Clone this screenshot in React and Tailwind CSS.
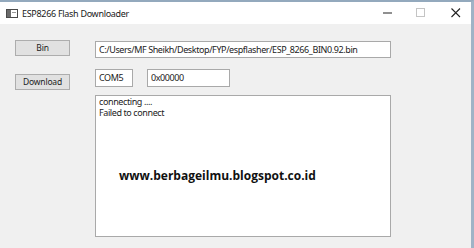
export default function App() {
  const ui = { fontFamily: '"Noto Sans", "Open Sans", sans-serif' };
  return (
    <div className="w-[474px] h-[248px] overflow-hidden bg-[#f0f0f0] border-t-2 border-t-[#93a9bd] border-r-[3px] border-r-[#9fb3c6] flex flex-col" style={ui}>
      <div className="h-[22px] bg-white flex items-center shrink-0">
        <svg width="12" height="9" viewBox="0 0 12 9" className="ml-[6px]">
          <rect x="0.5" y="0.5" width="11" height="8" fill="#fff" stroke="#4a4a4a" />
          <rect x="1" y="1" width="4" height="7" fill="#6b6b6b" />
          <rect x="6" y="3" width="4" height="1" fill="#9a9a9a" />
        </svg>
        <span className="ml-[4px] text-[9px] tracking-[-0.3px] text-[#1a1a1a] leading-none">ESP8266 Flash Downloader</span>
        <div className="ml-auto flex items-center h-full">
          <svg width="10" height="10" viewBox="0 0 10 10" className="mr-[23px]"><rect x="0" y="4.5" width="9" height="1" fill="#222" /></svg>
          <svg width="10" height="10" viewBox="0 0 10 10" className="mr-[25px]"><rect x="0.5" y="0.5" width="8" height="8" fill="none" stroke="#c4c4c4" /></svg>
          <svg width="10" height="10" viewBox="0 0 10 10" className="mr-[10px]"><path d="M0.5 0.5 L9 9 M9 0.5 L0.5 9" stroke="#222" strokeWidth="1.1" /></svg>
        </div>
      </div>
      <div className="flex flex-1">
        <div className="pl-[15px] pt-[16px] flex flex-col gap-[18px] w-[80px]">
          <div className="w-[55px] h-[16px] bg-[#e1e1e1] border border-[#adadad] flex items-center justify-center text-[8.5px] tracking-[-0.2px] text-[#222]">Bin</div>
          <div className="w-[55px] h-[16px] bg-[#e1e1e1] border border-[#adadad] flex items-center justify-center text-[8.5px] tracking-[-0.2px] text-[#222]">Download</div>
        </div>
        <div className="pl-[15px] pt-[17px] flex flex-col">
          <div className="w-[296px] h-[17px] bg-white border border-[#a9a9a9] flex items-center pl-[3px] text-[9px] tracking-[-0.4px] text-[#222] whitespace-nowrap">C:/Users/MF Sheikh/Desktop/FYP/espflasher/ESP_8266_BIN0.92.bin</div>
          <div className="flex mt-[11px] gap-[14px]">
            <div className="w-[38px] h-[18px] bg-white border border-[#a9a9a9] flex items-center pl-[3px] text-[9px] tracking-[-0.4px] text-[#222]">COM5</div>
            <div className="w-[83px] h-[18px] bg-white border border-[#a9a9a9] flex items-center pl-[3px] text-[9px] tracking-[-0.4px] text-[#222]">0x00000</div>
          </div>
          <div className="mt-[8px] w-[296px] h-[142px] bg-white border border-[#a9a9a9] flex flex-col pl-[3px]">
            <div className="text-[9px] tracking-[-0.4px] leading-[11px] text-[#222]">
              connecting ....<br />Failed to connect
            </div>
            <div className="mt-[52px] ml-[20px] text-[12px] font-bold text-[#111] leading-none" style={{ fontFamily: '"Open Sans", sans-serif' }}>www.berbageilmu.blogspot.co.id</div>
          </div>
        </div>
      </div>
    </div>
  );
}
